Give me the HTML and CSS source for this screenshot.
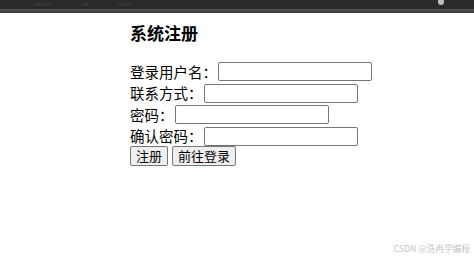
FILE: index.html
```html
<!DOCTYPE html>
<html lang="zh-CN">
<head>
<meta charset="utf-8">
<title>系统注册</title>
<link rel="stylesheet" href="styles.css">
</head>
<body>
<div class="topbar">
  <div class="bar-dark">
    <span class="ghost g1"></span>
    <span class="ghost g2"></span>
    <span class="ghost g3"></span>
    <span class="spacer"></span>
    <span class="dot"></span>
  </div>
  <div class="bar-line"></div>
</div>
<main class="content">
  <h2 class="title">系统注册</h2>
  <form class="form">
    <div class="row"><span class="label">登录用户名：</span><input class="field" type="text"></div>
    <div class="row"><span class="label">联系方式：</span><input class="field" type="text"></div>
    <div class="row"><span class="label">密码：</span><input class="field" type="password"></div>
    <div class="row"><span class="label">确认密码：</span><input class="field" type="password"></div>
    <div class="actions">
      <button class="btn" type="button">注册</button>
      <button class="btn" type="button">前往登录</button>
    </div>
  </form>
</main>
<div class="watermark">CSDN @浩冉学编程</div>
</body>
</html>
```
FILE: styles.css
```css
html, body {
  margin: 0;
  padding: 0;
  background: #ffffff;
}
body {
  width: 474px;
  height: 259px;
  overflow: hidden;
  position: relative;
  font-family: "Noto Sans CJK SC", "Noto Sans", sans-serif;
  color: #000;
}
.topbar {
  display: flex;
  flex-direction: column;
}
.bar-dark {
  height: 9px;
  background: #2a2a2a;
  display: flex;
  align-items: center;
  padding: 0 30px 0 34px;
}
.ghost {
  height: 3px;
  background: #333333;
  margin-right: 30px;
}
.g1 { width: 18px; }
.g2 { width: 6px; margin-right: 30px; }
.g3 { width: 14px; }
.spacer { flex: 1; }
.dot {
  width: 6px;
  height: 5px;
  border-radius: 0 0 3px 3px;
  background: #bdbdbd;
  align-self: flex-start;
}
.bar-line {
  height: 4px;
  background: linear-gradient(#565656, #454545 60%, #3a3a3a);
}
.content {
  padding-left: 130px;
}
.title {
  margin: 0;
  padding-top: 9px;
  font-size: 17px;
  line-height: 21px;
  font-weight: bold;
  height: 48px;
  box-sizing: border-box;
}
.form {
  display: flex;
  flex-direction: column;
}
.row {
  display: flex;
  align-items: center;
  height: 21.5px;
}
.label {
  font-size: 14.5px;
  line-height: 16px;
  white-space: nowrap;
}
.field {
  box-sizing: border-box;
  width: 154px;
  height: 19px;
  margin: 0 0 0 1px;
  padding: 0 2px;
  border: 1px solid #767676;
  border-radius: 2px;
  background: #fff;
  font-size: 12px;
}
.actions {
  display: flex;
  gap: 4px;
  height: 20px;
  margin-top: -0.75px;
}
.btn {
  box-sizing: border-box;
  height: 20px;
  margin: 0;
  padding: 0 5px;
  border: 1px solid #767676;
  border-radius: 2px;
  background: #efefef;
  font-family: "Noto Sans CJK SC", sans-serif;
  font-size: 13px;
  line-height: 18px;
  color: #000;
}
.watermark {
  position: absolute;
  right: 4px;
  top: 243px;
  font-size: 8.7px;
  line-height: 11px;
  color: #c4c4c4;
  font-family: "Noto Sans CJK SC", "Noto Sans", sans-serif;
}
```
